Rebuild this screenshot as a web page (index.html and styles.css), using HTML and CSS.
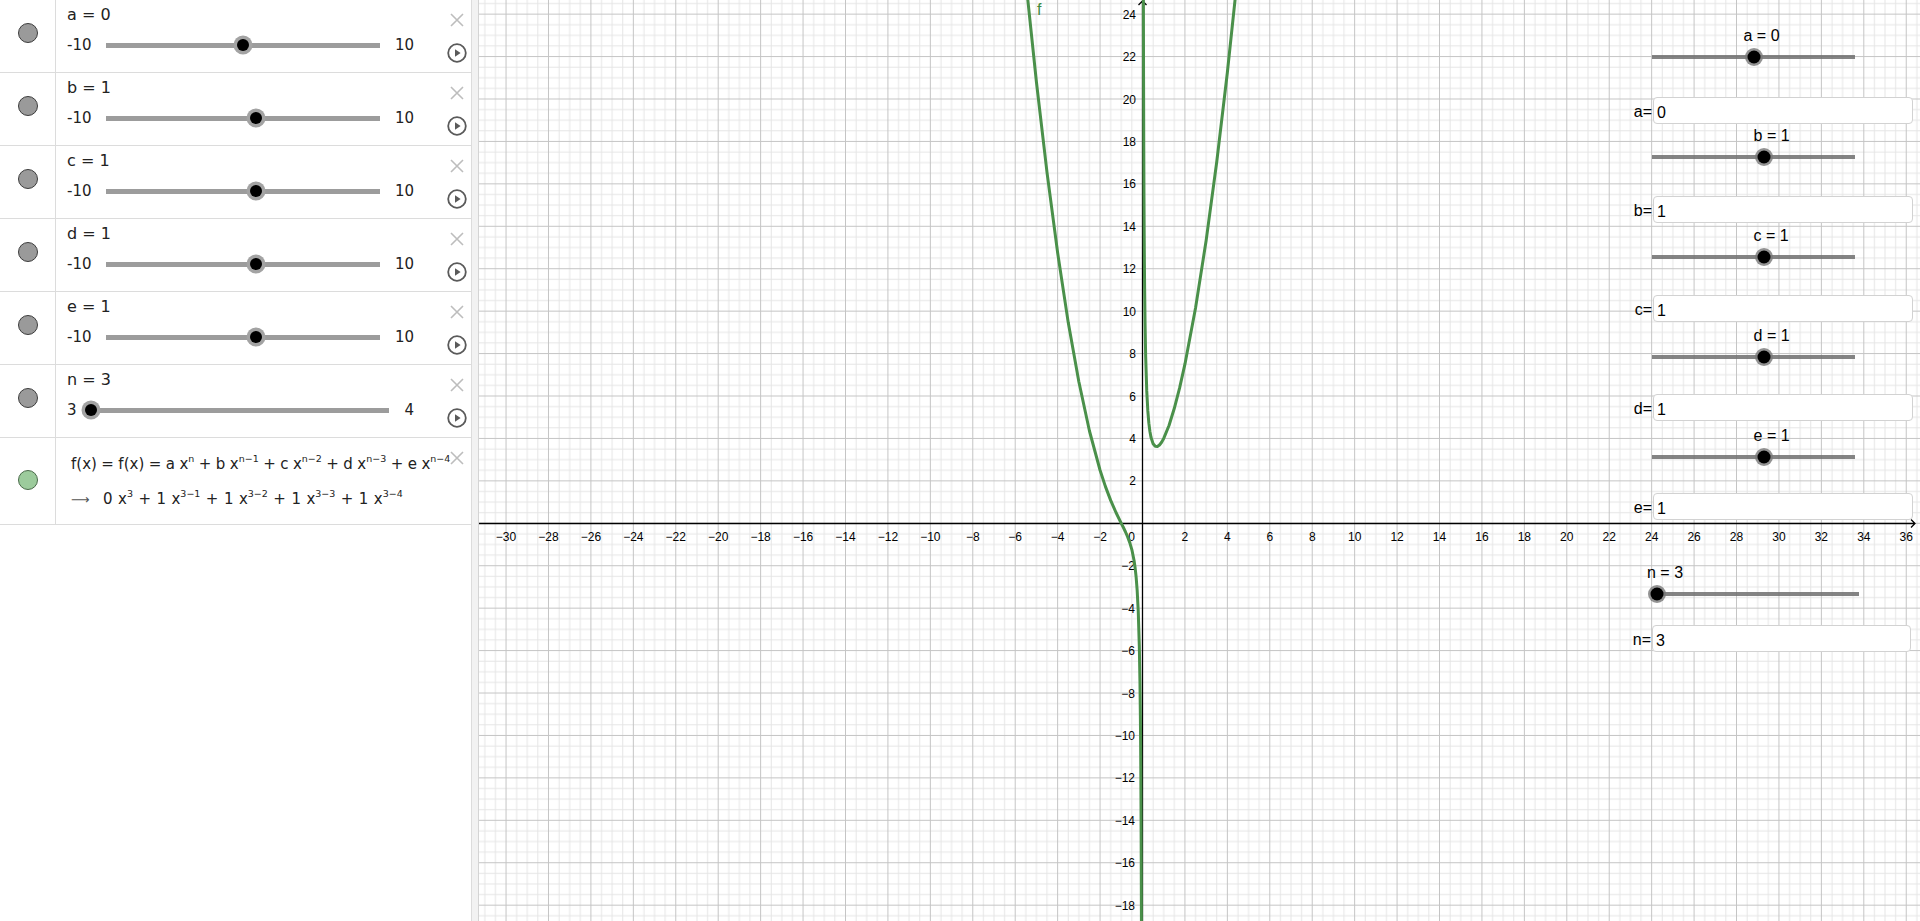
FILE: index.html
```html
<!DOCTYPE html>
<html>
<head>
<meta charset="utf-8">
<link rel="stylesheet" href="styles.css">
</head>
<body>
<div class="app">
  <aside class="algebra">
    <div class="row">
      <div class="marker"><span class="dot"></span></div>
      <div class="content">
        <div class="label">a = 0</div>
        <div class="slider"><span class="min">-10</span><div class="track"><span class="knob" style="left:50%"></span></div><span class="max">10</span></div>
      </div>
      <div class="icons">
        <svg class="close" viewBox="0 0 16 16"><path d="M2 2L14 14M14 2L2 14"/></svg>
        <svg class="play" viewBox="0 0 20 20"><circle cx="10" cy="10" r="8.8"/><path d="M8 6.3L13.6 10L8 13.7Z"/></svg>
      </div>
    </div>
    <div class="row">
      <div class="marker"><span class="dot"></span></div>
      <div class="content">
        <div class="label">b = 1</div>
        <div class="slider"><span class="min">-10</span><div class="track"><span class="knob" style="left:55%"></span></div><span class="max">10</span></div>
      </div>
      <div class="icons">
        <svg class="close" viewBox="0 0 16 16"><path d="M2 2L14 14M14 2L2 14"/></svg>
        <svg class="play" viewBox="0 0 20 20"><circle cx="10" cy="10" r="8.8"/><path d="M8 6.3L13.6 10L8 13.7Z"/></svg>
      </div>
    </div>
    <div class="row">
      <div class="marker"><span class="dot"></span></div>
      <div class="content">
        <div class="label">c = 1</div>
        <div class="slider"><span class="min">-10</span><div class="track"><span class="knob" style="left:55%"></span></div><span class="max">10</span></div>
      </div>
      <div class="icons">
        <svg class="close" viewBox="0 0 16 16"><path d="M2 2L14 14M14 2L2 14"/></svg>
        <svg class="play" viewBox="0 0 20 20"><circle cx="10" cy="10" r="8.8"/><path d="M8 6.3L13.6 10L8 13.7Z"/></svg>
      </div>
    </div>
    <div class="row">
      <div class="marker"><span class="dot"></span></div>
      <div class="content">
        <div class="label">d = 1</div>
        <div class="slider"><span class="min">-10</span><div class="track"><span class="knob" style="left:55%"></span></div><span class="max">10</span></div>
      </div>
      <div class="icons">
        <svg class="close" viewBox="0 0 16 16"><path d="M2 2L14 14M14 2L2 14"/></svg>
        <svg class="play" viewBox="0 0 20 20"><circle cx="10" cy="10" r="8.8"/><path d="M8 6.3L13.6 10L8 13.7Z"/></svg>
      </div>
    </div>
    <div class="row">
      <div class="marker"><span class="dot"></span></div>
      <div class="content">
        <div class="label">e = 1</div>
        <div class="slider"><span class="min">-10</span><div class="track"><span class="knob" style="left:55%"></span></div><span class="max">10</span></div>
      </div>
      <div class="icons">
        <svg class="close" viewBox="0 0 16 16"><path d="M2 2L14 14M14 2L2 14"/></svg>
        <svg class="play" viewBox="0 0 20 20"><circle cx="10" cy="10" r="8.8"/><path d="M8 6.3L13.6 10L8 13.7Z"/></svg>
      </div>
    </div>
    <div class="row">
      <div class="marker"><span class="dot"></span></div>
      <div class="content">
        <div class="label">n = 3</div>
        <div class="slider"><span class="min">3</span><div class="track"><span class="knob" style="left:0%"></span></div><span class="max">4</span></div>
      </div>
      <div class="icons">
        <svg class="close" viewBox="0 0 16 16"><path d="M2 2L14 14M14 2L2 14"/></svg>
        <svg class="play" viewBox="0 0 20 20"><circle cx="10" cy="10" r="8.8"/><path d="M8 6.3L13.6 10L8 13.7Z"/></svg>
      </div>
    </div>
    <div class="row func">
      <div class="marker"><span class="dot green"></span></div>
      <div class="content">
        <div class="fline">f(x) = f(x) = a x<sup>n</sup> + b x<sup>n−1</sup> + c x<sup>n−2</sup> + d x<sup>n−3</sup> + e x<sup>n−4</sup></div>
        <div class="fline out"><span class="arrow">⟶</span>0 x<sup>3</sup> + 1 x<sup>3−1</sup> + 1 x<sup>3−2</sup> + 1 x<sup>3−3</sup> + 1 x<sup>3−4</sup></div>
      </div>
      <div class="icons">
        <svg class="close" viewBox="0 0 16 16"><path d="M2 2L14 14M14 2L2 14"/></svg>
      </div>
    </div>
  </aside>
  <div class="splitter"></div>
  <main class="graph">
    <svg class="plot" width="1441" height="921" viewBox="0 0 1441 921">
      <defs>
        <pattern id="grid" patternUnits="userSpaceOnUse" x="663" y="522.8" width="42.43" height="42.43">
          <path d="M11.11 0V42.43M21.72 0V42.43M32.32 0V42.43M0 11.11H42.43M0 21.72H42.43M0 32.32H42.43" stroke="#e5e5e5" stroke-width="1" fill="none"/>
          <path d="M0.5 0V42.43M0 0.5H42.43" stroke="#c4c4c4" stroke-width="1" fill="none"/>
        </pattern>
      </defs>
      <rect width="1441" height="921" fill="#fff"/>
      <rect width="1441" height="921" fill="url(#grid)"/>
      <g class="axes">
        <path d="M0 523.5H1436M1432 519.5L1436 523.5L1432 527.5"/>
        <path d="M663.5 921V1M659.5 5L663.5 1L667.5 5"/>
      </g>
      <g class="xl">
        <text x="27.05" y="540.5">−30</text><text x="69.48" y="540.5">−28</text><text x="111.91" y="540.5">−26</text><text x="154.34" y="540.5">−24</text><text x="196.77" y="540.5">−22</text><text x="239.2" y="540.5">−20</text><text x="281.63" y="540.5">−18</text><text x="324.06" y="540.5">−16</text><text x="366.49" y="540.5">−14</text><text x="408.92" y="540.5">−12</text><text x="451.35" y="540.5">−10</text><text x="493.78" y="540.5">−8</text><text x="536.21" y="540.5">−6</text><text x="578.64" y="540.5">−4</text><text x="621.07" y="540.5">−2</text>
        <text x="705.93" y="540.5">2</text><text x="748.36" y="540.5">4</text><text x="790.79" y="540.5">6</text><text x="833.22" y="540.5">8</text><text x="875.65" y="540.5">10</text><text x="918.08" y="540.5">12</text><text x="960.51" y="540.5">14</text><text x="1002.94" y="540.5">16</text><text x="1045.37" y="540.5">18</text><text x="1087.8" y="540.5">20</text><text x="1130.23" y="540.5">22</text><text x="1172.66" y="540.5">24</text><text x="1215.09" y="540.5">26</text><text x="1257.52" y="540.5">28</text><text x="1299.95" y="540.5">30</text><text x="1342.38" y="540.5">32</text><text x="1384.81" y="540.5">34</text><text x="1427.24" y="540.5">36</text>
      </g>
      <g class="yl">
        <text x="657" y="18.6">24</text><text x="657" y="61.1">22</text><text x="657" y="103.5">20</text><text x="657" y="145.9">18</text><text x="657" y="188.4">16</text><text x="657" y="230.8">14</text><text x="657" y="273.2">12</text><text x="657" y="315.7">10</text><text x="657" y="358.1">8</text><text x="657" y="400.5">6</text><text x="657" y="442.9">4</text><text x="657" y="485.4">2</text>
        <text x="656" y="540.5">0</text>
        <text x="656" y="570.2">−2</text><text x="656" y="612.7">−4</text><text x="656" y="655.1">−6</text><text x="656" y="697.5">−8</text><text x="656" y="740">−10</text><text x="656" y="782.4">−12</text><text x="656" y="824.8">−14</text><text x="656" y="867.2">−16</text><text x="656" y="909.7">−18</text>
      </g>
      <g transform="translate(663.5 523.3) scale(21.215 -21.215)">
        <polyline class="curve" vector-effect="non-scaling-stroke" points="0.035,29.61 0.04,26.04 0.045,23.27 0.05,21.05 0.06,17.73 0.07,15.36 0.08,13.59 0.09,12.21 0.1,11.11 0.12,9.47 0.15,7.84 0.2,6.24 0.25,5.31 0.3,4.72 0.35,4.33 0.4,4.06 0.5,3.75 0.6,3.63 0.7,3.62 0.8,3.69 0.9,3.82 1,4 1.25,4.61 1.5,5.42 1.75,6.38 2,7.5 2.5,10.15 3,13.33 3.5,17.04 4,21.25 4.5,25.97 4.7,28"/>
        <polyline class="curve" vector-effect="non-scaling-stroke" points="-5.8,28.67 -5.5,25.57 -5,20.8 -4.5,16.53 -4,12.75 -3.5,9.46 -3,6.67 -2.5,4.35 -2,2.5 -1.75,1.74 -1.5,1.08 -1.25,0.51 -1,0 -0.9,-0.2 -0.8,-0.41 -0.7,-0.64 -0.6,-0.91 -0.5,-1.25 -0.4,-1.74 -0.35,-2.08 -0.3,-2.54 -0.25,-3.19 -0.2,-4.16 -0.15,-5.79 -0.12,-7.44 -0.1,-9.09 -0.09,-10.19 -0.08,-11.57 -0.07,-13.35 -0.06,-15.72 -0.05,-19.05 -0.045,-21.26 -0.04,-24.04"/>
      </g>
      <text class="flabel" x="558" y="15">f</text>
    </svg>

    <div class="gslider gs-a"><div class="glabel" style="margin-left:91.5px">a = 0</div><div class="gtrack"><span class="gknob" style="left:50%"></span></div></div>
    <div class="field fd-a"><span class="flab">a=</span><div class="fbox">0</div></div>
    <div class="gslider gs-b"><div class="glabel" style="margin-left:101.6px">b = 1</div><div class="gtrack"><span class="gknob" style="left:55%"></span></div></div>
    <div class="field fd-b"><span class="flab">b=</span><div class="fbox">1</div></div>
    <div class="gslider gs-c"><div class="glabel" style="margin-left:101.6px">c = 1</div><div class="gtrack"><span class="gknob" style="left:55%"></span></div></div>
    <div class="field fd-c"><span class="flab">c=</span><div class="fbox">1</div></div>
    <div class="gslider gs-d"><div class="glabel" style="margin-left:101.6px">d = 1</div><div class="gtrack"><span class="gknob" style="left:55%"></span></div></div>
    <div class="field fd-d"><span class="flab">d=</span><div class="fbox">1</div></div>
    <div class="gslider gs-e"><div class="glabel" style="margin-left:101.6px">e = 1</div><div class="gtrack"><span class="gknob" style="left:55%"></span></div></div>
    <div class="field fd-e"><span class="flab">e=</span><div class="fbox">1</div></div>
    <div class="gslider gs-n"><div class="glabel" style="margin-left:-10px">n = 3</div><div class="gtrack"><span class="gknob" style="left:0%"></span></div></div>
    <div class="field fd-n"><span class="flab">n=</span><div class="fbox">3</div></div>
  </main>
</div>
</body>
</html>
```
FILE: styles.css
```css
html, body {
  margin: 0;
  padding: 0;
  overflow: hidden;
  background: #fff;
}
body {
  font-family: "DejaVu Sans", "Liberation Sans", sans-serif;
  color: #222;
}
.app {
  display: flex;
  width: 1920px;
  height: 921px;
}
.algebra {
  flex: none;
  width: 471px;
  height: 921px;
  border-right: 1px solid #dcdcdc;
  background: #fff;
}
.splitter {
  flex: none;
  width: 6px;
  background: #f2f2f2;
  border-right: 1px solid #d4d4d4;
}
.graph {
  flex: 1;
  position: relative;
  overflow: hidden;
  height: 921px;
}
.plot {
  display: block;
}

/* algebra rows */
.row {
  display: flex;
  height: 72px;
  border-bottom: 1px solid #dcdcdc;
}
.row.func {
  height: 86px;
}
.marker {
  flex: none;
  width: 56px;
  border-right: 1px solid #dcdcdc;
  display: flex;
  justify-content: center;
  align-items: flex-start;
  padding-top: 23px;
  box-sizing: border-box;
}
.func .marker {
  padding-top: 32px;
}
.dot {
  width: 18px;
  height: 18px;
  border-radius: 50%;
  background: #9a9a9a;
  border: 1px solid #3c3c3c;
}
.dot.green {
  background: #9ccb9c;
  border-color: #4a6a4a;
}
.content {
  flex: 1;
  min-width: 0;
  padding-left: 11px;
  padding-top: 3px;
  white-space: nowrap;
}
.label {
  height: 24px;
  line-height: 24px;
  font-size: 16px;
}
.slider {
  display: flex;
  align-items: center;
  height: 24px;
  margin-top: 6px;
  padding-right: 29px;
  font-size: 15px;
}
.track {
  position: relative;
  flex: 1;
  height: 5px;
  margin: 0 15px 0 14px;
  background: #9c9c9c;
}
.knob {
  position: absolute;
  top: 50%;
  width: 12px;
  height: 12px;
  border-radius: 50%;
  background: #000;
  box-shadow: 0 0 0 3.5px #a3a3a3;
  transform: translate(-50%, -50%);
}
.icons {
  flex: none;
  width: 28px;
  display: flex;
  flex-direction: column;
  align-items: center;
}
.close {
  width: 16px;
  height: 16px;
  margin-top: 12px;
  fill: none;
  stroke: #bdbdbd;
  stroke-width: 1.6;
}
.play {
  width: 20px;
  height: 20px;
  margin-top: 15px;
}
.play circle {
  fill: none;
  stroke: #5a5a5a;
  stroke-width: 1.8;
}
.play path {
  fill: #5a5a5a;
}

/* function row */
.func .content {
  padding-top: 16px;
  padding-left: 15px;
}
.fline {
  font-size: 15px;
  line-height: 20px;
  height: 20px;
  word-spacing: -0.3px;
}
.fline.out {
  margin-top: 15px;
  word-spacing: 0.7px;
}
.fline sup {
  font-size: 9.5px;
  line-height: 0;
  vertical-align: 7px;
  word-spacing: 0;
}
.arrow {
  display: inline-block;
  width: 32px;
  font-size: 13px;
  color: #555;
}

/* graph */
.axes path {
  fill: none;
  stroke: #000;
  stroke-width: 1.3;
}
.xl text {
  font: 12px "Liberation Sans", Arial, sans-serif;
  fill: #000;
  text-anchor: middle;
}
.yl text {
  font: 12px "Liberation Sans", Arial, sans-serif;
  fill: #000;
  text-anchor: end;
}
.curve {
  fill: none;
  stroke: #4a904a;
  stroke-width: 3;
  stroke-linejoin: round;
  stroke-linecap: round;
}
.flabel {
  font: 16px "Liberation Sans", Arial, sans-serif;
  fill: #3f8a3f;
}

/* sliders on the canvas */
.gslider {
  position: absolute;
  left: 1173px;
  width: 203px;
}
.gs-a { top: 27.3px; }
.gs-b { top: 127.3px; }
.gs-c { top: 227px; }
.gs-d { top: 327px; }
.gs-e { top: 427px; }
.gs-n { top: 564.3px; left: 1178px; width: 202px; }
.glabel {
  font: 16px/18px "Liberation Sans", Arial, sans-serif;
  height: 18px;
  color: #000;
  white-space: nowrap;
}
.gtrack {
  position: relative;
  height: 4px;
  margin-top: 10px;
  background: rgba(110, 110, 110, 0.85);
}
.gknob {
  position: absolute;
  top: 50%;
  width: 13px;
  height: 13px;
  border-radius: 50%;
  background: #000;
  box-shadow: 0 0 0 2.5px rgba(120, 120, 120, 0.8);
  transform: translate(-50%, -50%);
}

/* input boxes on the canvas */
.field {
  position: absolute;
  right: 7px;
  display: flex;
  align-items: flex-start;
  font: 16px "Liberation Sans", Arial, sans-serif;
  color: #000;
}
.fd-a { top: 97px; }
.fd-b { top: 196px; }
.fd-c { top: 295px; }
.fd-d { top: 394px; }
.fd-e { top: 493px; }
.fd-n { top: 625px; right: 9px; }
.flab {
  padding-top: 3px;
  line-height: 24px;
  margin-right: 1px;
}
.fbox {
  width: 260px;
  height: 27px;
  box-sizing: border-box;
  padding: 3px 0 0 3px;
  line-height: 23px;
  background: #fff;
  border: 1px solid #d2d2d2;
  border-radius: 4px;
}
.fd-n .fbox {
  width: 259px;
}
```
